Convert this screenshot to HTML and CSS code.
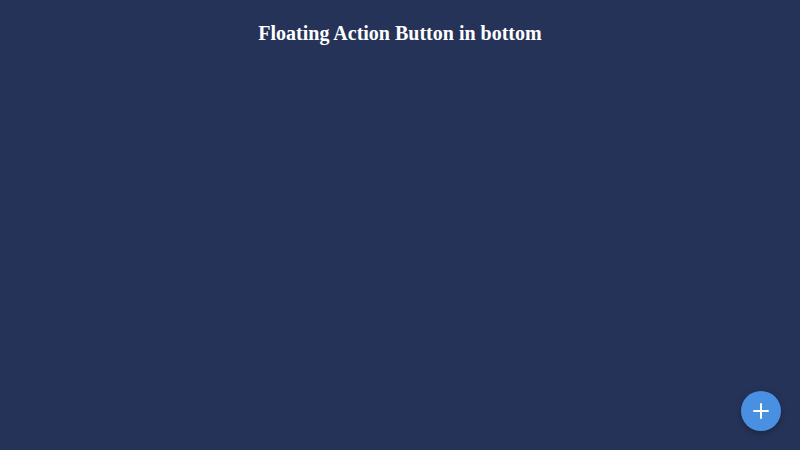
FILE: index.html
```html
<!DOCTYPE html>
<html lang="en">
<head>
  <meta charset="UTF-8">
  <meta name="viewport" content="width=device-width, initial-scale=1.0">
  <title>Floating Action Button</title>
  <link rel="stylesheet" href="styles.css">
</head>
<body>
  <h2>Floating Action Button in bottom</h2>

  <button class="fab" title="Add">
    <svg width="18" height="18" viewBox="0 0 18 18">
      <path d="M9 2v14M2 9h14" stroke="#fff" stroke-width="2" stroke-linecap="round"/>
    </svg>
  </button>
</body>
</html>
```

FILE: styles.css
```css
body {
  font-family: "Liberation Serif", "Times New Roman", serif;
  background-color: #263359;
  color: #fff;
  margin: 0;
  padding: 1px 0 0;
  text-align: center;
}

h2 {
  font-size: 20px;
  line-height: 23px;
  margin: 21px 0;
}

.fab {
  position: fixed;
  right: 19px;
  bottom: 19px;
  width: 40px;
  height: 40px;
  border: none;
  border-radius: 50%;
  background-color: #4a90e2;
  box-shadow: 0 2px 6px rgba(0, 0, 0, 0.3);
  display: flex;
  align-items: center;
  justify-content: center;
  padding: 0;
  cursor: pointer;
}
```
